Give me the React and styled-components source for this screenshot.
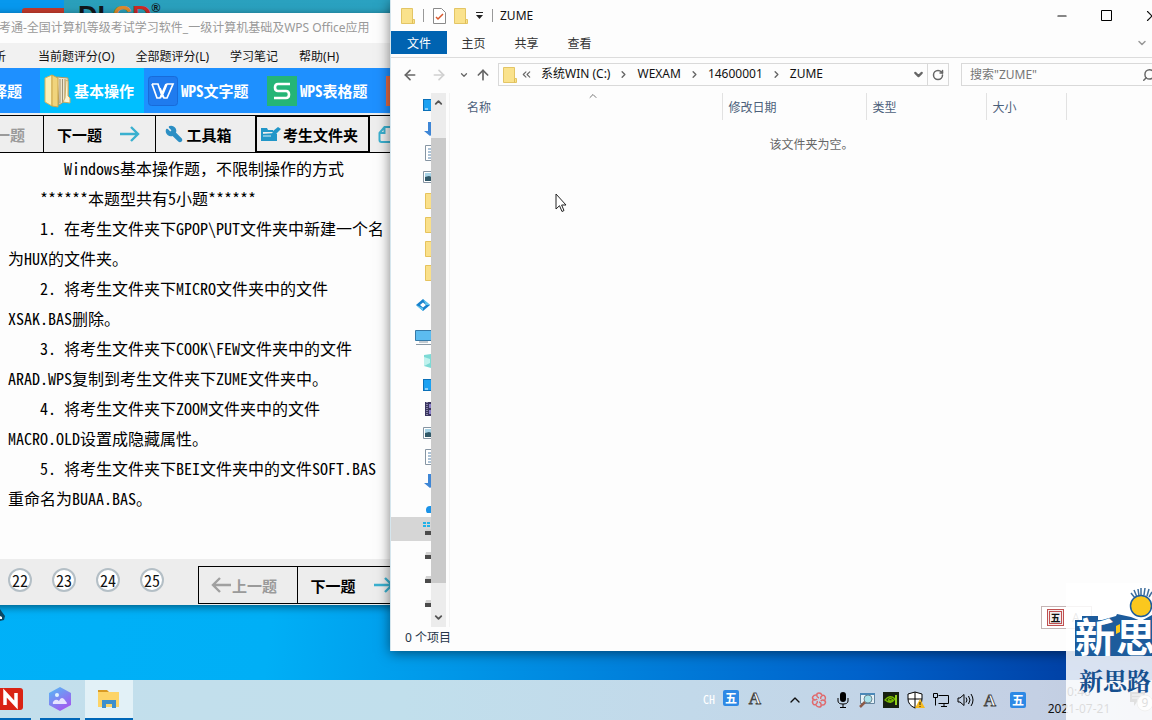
import React from 'react';
import styled, { createGlobalStyle } from 'styled-components';
import {
  ArrowLeft, ArrowRight, ArrowUp, ChevronDown, ChevronUp, ChevronRight,
  ChevronsLeft, RotateCw, Search, Wrench, Minus, X,
} from 'lucide-react';

const uiFont = '"Noto Sans", "Noto Sans CJK SC", sans-serif';
const songFont = '"Noto Sans Mono CJK SC", "Liberation Mono", "Noto Sans CJK SC", monospace';

const GlobalStyle = createGlobalStyle`
  * { box-sizing: border-box; }
  body {
    margin: 0;
    font-family: ${uiFont};
    font-size: 12px;
    color: #111;
  }
  button, input {
    font: inherit;
    color: inherit;
    border: none;
    background: none;
    padding: 0;
    margin: 0;
  }
  svg { display: block; flex: none; }
`;

const Desktop = styled.div`
  position: relative;
  height: 100vh;
  min-height: 480px;
  overflow: hidden;
  display: flex;
  flex-direction: column;
  justify-content: flex-end;
  background: linear-gradient(97deg, #00b1f8 0%, #00aff6 28%, #0089e0 52%, #0062cb 76%, #0043a8 92%, #003c9c 100%);
`;

/* ---------- wallpaper ---------- */

const Wallpaper = styled.div`
  position: absolute;
  top: 0;
  left: 0;
  right: 0;
  height: 60px;
  display: flex;
  background: #0798ee;
`;

const RedTile = styled.div`
  width: 42px;
  height: 24px;
  margin: 8px 0 0 22px;
  border-radius: 3px 0 0 0;
  background: #c43a2c;
`;

const Banner = styled.div`
  flex: 1;
  display: flex;
  padding-left: 14px;
  background: linear-gradient(90deg, #2a9fba, #2aa3c4 40%, #1784aa 70%, #167a9e);
  font: bold 27px/32px "Liberation Sans", sans-serif;
  color: #10161b;
  sup { font-size: 12px; line-height: 17px; }
`;

const BannerLetter = styled.span`
  color: ${(p) => p.$color};
`;

/* ---------- exam window ---------- */

const ExamWindow = styled.section`
  position: absolute;
  top: 13px;
  left: -12px;
  width: 420px;
  bottom: 115px;
  display: flex;
  flex-direction: column;
  background: #fdfdfd;
  box-shadow: 0 2px 8px rgba(0, 0, 0, 0.5);
`;

const ExamTitle = styled.header`
  height: 30px;
  line-height: 30px;
  padding-left: 11px;
  white-space: nowrap;
  color: #999;
`;

const ExamMenu = styled.nav`
  display: flex;
  gap: 21px;
  height: 25px;
  padding-left: 6px;
  background: #f1f1f1;
  button { white-space: nowrap; }
  button:first-child { margin-right: 11px; }
`;

const ExamTabs = styled.nav`
  display: flex;
  height: 45px;
  background: #1e90ff;
`;

const ExamTab = styled.button`
  display: flex;
  align-items: center;
  gap: ${(p) => p.$gap || 0}px;
  width: ${(p) => p.$width}px;
  padding-left: 4px;
  flex: none;
  white-space: nowrap;
  font: bold 15px ${songFont};
  color: #fff;
  background: ${(p) => (p.$active ? '#00bfff' : 'transparent')};
`;

const ToolRow = styled.div`
  display: flex;
  flex: none;
  padding-top: 2px;
  background: #eee;
`;

const ToolButton = styled.button`
  display: flex;
  align-items: center;
  justify-content: center;
  flex: none;
  gap: ${(p) => p.$gap || 0}px;
  width: ${(p) => p.$width}px;
  height: 38px;
  margin-right: -1px;
  padding-right: ${(p) => p.$slack || 0}px;
  white-space: nowrap;
  font: bold 15px ${songFont};
  color: ${(p) => (p.$muted ? '#9a9a9a' : '#000')};
  border: ${(p) => (p.$current ? 2 : 1)}px solid #000;
`;

const Question = styled.article`
  flex: 1;
  overflow: hidden;
  width: 400px;
  padding-left: 20px;
  font: 16px/30px ${songFont};
  color: #000;
  p { margin: 0; text-indent: 32px; }
  p:first-child { text-indent: 56px; }
`;

const ExamFooter = styled.footer`
  display: flex;
  flex: none;
  height: 46px;
  padding: 7px 0 0 20px;
  background: #ededed;
`;

const NumberList = styled.div`
  display: flex;
  gap: 20px;
  padding-top: 2px;
  margin-right: 34px;
`;

const NumberButton = styled.button`
  width: 24px;
  height: 24px;
  border: 2px solid #b4bfc6;
  border-radius: 50%;
  background: #fff;
  font: 16px/20px ${songFont};
  display: flex;
  justify-content: center;
`;

/* ---------- explorer window ---------- */

const ExplorerWindow = styled.section`
  position: absolute;
  top: 0;
  left: 390px;
  right: -22px;
  bottom: 69px;
  display: flex;
  flex-direction: column;
  background: #fdfdfd;
  border-left: 1px solid #d5e6ee;
  box-shadow: 0 2px 12px rgba(0, 0, 0, 0.5);
`;

const TitleBar = styled.header`
  display: flex;
  align-items: center;
  height: 31px;
  padding-left: 10px;
  gap: 7px;
`;

const QuickTools = styled.div`
  display: flex;
  align-items: center;
  gap: 8px;
`;

const Divider = styled.span`
  width: 1px;
  height: 13px;
  background: #999;
`;

const WindowButtons = styled.div`
  display: flex;
  margin-left: auto;
`;

const WindowButton = styled.button`
  display: flex;
  align-items: center;
  justify-content: center;
  width: 45px;
  height: 30px;
`;

const Ribbon = styled.nav`
  display: flex;
  align-items: center;
  height: 27px;
  padding: 0 26px 3px 0;
  border-bottom: 1px solid #dcdcdc;
  svg { margin-left: auto; }
`;

const RibbonTab = styled.button`
  width: ${(p) => (p.$file ? 56 : 53)}px;
  height: 23px;
  color: ${(p) => (p.$file ? '#fff' : '#333')};
  background: ${(p) => (p.$file ? '#0063b1' : 'transparent')};
`;

const AddressRow = styled.div`
  display: flex;
  align-items: center;
  height: 35px;
  padding: 0 9px 2px 11px;
  color: #666;
`;

const NavButton = styled.button`
  display: flex;
  align-items: center;
  justify-content: center;
  width: ${(p) => p.$width}px;
  color: ${(p) => (p.$faded ? '#d0d0d0' : '#666')};
`;

const AddressBox = styled.div`
  display: flex;
  align-items: center;
  flex: 1;
  height: 23px;
  margin-right: 12px;
  padding-left: 4px;
  border: 1px solid #d9d9d9;
`;

const Crumbs = styled.div`
  display: flex;
  align-items: center;
  flex: 1;
  gap: 8px;
  padding-left: 3px;
  a { color: #111; text-decoration: none; white-space: nowrap; line-height: 17px; padding-bottom: 2px; }
`;

const Refresh = styled.button`
  display: flex;
  align-items: center;
  justify-content: center;
  width: 21px;
  height: 21px;
  margin-left: 2px;
  border-left: 1px solid #d9d9d9;
`;

const SearchBox = styled.label`
  display: flex;
  align-items: center;
  width: 204px;
  height: 23px;
  padding: 0 8px;
  border: 1px solid #d9d9d9;
  input { flex: 1; min-width: 0; outline: none; }
  input::placeholder { color: #767676; opacity: 1; }
`;

const SearchIcon = styled(Search)`
  transform: scaleX(-1);
`;

const ExplorerBody = styled.div`
  display: flex;
  flex: 1;
  min-height: 0;
`;

const NavPane = styled.ul`
  width: 40px;
  margin: 0;
  padding: 0;
  list-style: none;
  overflow: hidden;
`;

const NavItem = styled.li`
  display: flex;
  align-items: center;
  height: 24px;
  margin-top: ${(p) => (p.$root ? 8 : 0)}px;
  padding-left: ${(p) => (p.$root ? 24 : 32)}px;
  background: ${(p) => (p.$selected ? '#d6d6d6' : 'transparent')};
`;

const ScrollBar = styled.div`
  display: flex;
  flex-direction: column;
  width: 15px;
  background: #ececec;
`;

const ScrollButton = styled.button`
  display: flex;
  justify-content: center;
  align-items: ${(p) => (p.$end ? 'flex-end' : 'flex-start')};
  padding: 4px 0;
  height: ${(p) => p.$height}px;
`;

const ScrollThumb = styled.div`
  flex: 1;
  background: #cacaca;
`;

const FilePane = styled.div`
  flex: 1;
  margin-left: 3px;
  border-left: 1px solid #f3f3f3;
  padding-left: 11px;
`;

const FileTable = styled.table`
  width: 100%;
  table-layout: fixed;
  border-collapse: collapse;
  color: #666;
  th {
    height: 27px;
    padding: 0 0 0 6px;
    text-align: left;
    font-weight: normal;
    color: #4c607a;
    border-right: 1px solid #e2e2e2;
  }
  th:last-child { border-right: none; }
  td {
    padding: 15px 12px 0 0;
    text-align: center;
  }
`;

const SortMark = styled(ChevronUp)`
  position: absolute;
  top: 90px;
  left: 196px;
  color: #777;
`;

const StatusBar = styled.footer`
  height: 24px;
  padding-left: 14px;
  line-height: 22px;
  color: #26364a;
`;

/* ---------- ime box, stamp ---------- */

const ImeBox = styled.div`
  position: absolute;
  right: 60px;
  bottom: 91px;
  display: flex;
  align-items: center;
  gap: 8px;
  width: 51px;
  height: 23px;
  padding-left: 5px;
  border: 1px solid #c4b4b4;
  background: #fff;
  color: #777;
`;

const Seal = styled.span`
  width: 17px;
  height: 17px;
  border: 3px double #c05050;
  background: #f4eded;
  font: bold 10px/11px "Noto Sans CJK SC", sans-serif;
  text-align: center;
  color: #111;
`;

const Stamp = styled.aside`
  position: absolute;
  right: 0;
  bottom: 0;
  width: 86px;
  height: 137px;
  padding: 3px 0 0 8px;
  overflow: hidden;
  background: rgba(255, 255, 255, 0.85);
`;

const StampName = styled.div`
  margin-left: 5px;
  font: bold 24px/36px "Noto Serif CJK SC", "Noto Sans CJK SC", sans-serif;
  color: #16508e;
  white-space: nowrap;
`;

/* ---------- taskbar ---------- */

const Taskbar = styled.footer`
  position: relative;
  display: flex;
  height: 40px;
  background: linear-gradient(90deg, #c3dfec, #c1dfec 35%, #c2d9ea 60%, #c4d0e4 90%, #c0cadd);
`;

const TaskButton = styled.button`
  display: flex;
  justify-content: ${(p) => (p.$first ? 'flex-start' : 'center')};
  align-items: center;
  width: ${(p) => p.$width}px;
  margin-right: ${(p) => p.$after || 0}px;
  border-bottom: 2px solid #0067b8;
  background: ${(p) => (p.$active ? '#e2f1f7' : 'transparent')};
`;

const Tray = styled.div`
  display: flex;
  align-items: center;
  margin-left: auto;
  gap: 8px;
`;

const InputLang = styled.div`
  display: flex;
  align-items: center;
  gap: 8px;
  margin-right: 16px;
  padding-bottom: 4px;
`;

const Lang = styled.span`
  font: 12px ${songFont};
  color: #fff;
`;

const Wubi = styled.span`
  width: 16px;
  height: 16px;
  margin-left: ${(p) => (p.$spaced ? 4 : 0)}px;
  border-radius: 2px;
  background: #2d89e5;
  font: bold 12px/15px "Noto Sans CJK SC", sans-serif;
  text-align: center;
  color: #fff;
`;

const Clock = styled.div`
  width: 68px;
  margin: 0 8px 0 11px;
  text-align: center;
  line-height: 17px;
`;

const ArrowIcon = ({ flip, color = '#3ab0cf' }) => (
  <svg width="20" height="16" viewBox="0 0 20 16" fill="none" stroke={color} strokeWidth="2.4">
    <path d={flip ? 'M20 8H2M9 1L2 8l7 7' : 'M0 8h18M11 1l7 7-7 7'} />
  </svg>
);

const FolderIcon = ({ width = 14, height = 16 }) => (
  <svg width={width} height={height} viewBox="0 0 14 16">
    <path d="M.5.5h11v11h2v4H.5z" fill="#fae28c" stroke="#e3c565" />
    <path d="M11.5 11.5v4" stroke="#dfbe57" />
  </svg>
);

const BinderIcon = () => (
  <svg width="27" height="34" viewBox="0 0 27 34">
    <path d="M13 3l11 1v21l-9 6z" fill="#efe6cc" stroke="#b39a63" />
    <path d="M16 5v24M18.500 5v23M21 5v20" stroke="#8a7b5e" strokeWidth=".8" />
    <path d="M1 4l7-3v31l-7-4z" fill="#fbf0b8" stroke="#d5b458" />
    <path d="M8 1l6 3v29l-6-1z" fill="#f0d47c" stroke="#cda64a" />
    <path d="M22 6l2 1v15l2 2v5l-7-1 2-4z" fill="#fbf3d6" stroke="#cfae60" />
  </svg>
);

const WpsWriter = () => (
  <svg width="30" height="30" viewBox="0 0 30 30">
    <rect x=".5" y=".5" width="29" height="29" rx="3" fill="#1f7bee" stroke="#186bd9" />
    <path d="M4 8h6l4 12 5-12h6l-6 14h-3L12 12M4 8l5 14h3l6-14" fill="none" stroke="#fff" strokeWidth="1.700" />
  </svg>
);

const WpsSheet = () => (
  <svg width="30" height="30" viewBox="0 0 30 30">
    <rect width="30" height="30" fill="#25b577" />
    <path d="M23 8H11q-3 0-3 3.500t3 3.500h8q3 0 3 3.500t-3 3.500H7" fill="none" stroke="#fff" strokeWidth="2.600" />
  </svg>
);

const FolderEdit = () => (
  <svg width="20" height="15" viewBox="0 0 20 15" fill="#2196c8">
    <path d="M0 1h6l1 2h5v2H2v2H0z" />
    <path d="M0 7l14-1 2 1v7H0z" />
    <path d="M11 7l1-3 5-4 3 2-5 5z" />
    <path d="M2 9h8" stroke="#d8eef6" />
  </svg>
);

const SheetIcon = () => (
  <svg width="20" height="20" viewBox="0 0 20 20" fill="none" stroke="#3ab0cf" strokeWidth="2">
    <path d="M1.500 9l5-6h12v15h-15q-2 0-2-2zM1.500 9h5V3" />
  </svg>
);

// drawings of the navigation pane, keyed by item kind
const navShapes = {
  desktop: <><rect x=".5" y="2.5" width="15" height="11" fill="#1ba1f2" stroke="#0a70b8" /><path d="M2 12h3" stroke="#fff" /></>,
  download: <path d="M5 1h5v8h4L7 15 1 10h4z" fill="#3e86d6" />,
  document: <><path d="M2.500.5h11v15h-11z" fill="#fff" stroke="#8695a3" /><path d="M5 4h6M5 7h6M5 10h6M5 13h6" stroke="#5a86ad" /></>,
  picture: <><path d="M.5 2.500h15v11H.5z" fill="#fff" stroke="#8695a3" /><path d="M2 4h12v8H2z" fill="#a8d3e6" /><path d="M2 12V8l4-1 8 3v2z" fill="#305868" /></>,
  folder: <path d="M2.500.5h12v15h-12z" fill="#fae08a" stroke="#e6c35c" />,
  cloud: <><path d="M8 2l7 6-7 6-7-6z" fill="#1781cc" /><path d="M8 5.500l3 2.500-3 2.500L5 8z" fill="#fff" /><path d="M8 2l7 6h-4zM1 8l7 6v-3z" fill="#5fc5ee" /></>,
  computer: <><path d="M.5 1.500h16v10H.5z" fill="#5cbcf0" stroke="#3679a7" /><path d="M4 13h9M1 15.500h16" stroke="#8a99a6" /></>,
  cube: <><path d="M1 2l7-1v14l-7-2z" fill="#7ddad5" /><path d="M1 4l6 2v4l-6 3z" fill="#bff2ee" /></>,
  video: <><path d="M2 1h13v14H2z" fill="#3a3560" /><path d="M4 1v14" stroke="#d8d8ea" strokeDasharray="1 1" /><path d="M6 3h6v4H6zM6 9h6v4H6z" fill="#8a7fc8" /></>,
  music: <circle cx="7" cy="13" r="4" fill="#1b93e8" />,
  system: <><path d="M0 1h3v2H0zM4 1h3v2H4zM0 4h3v2H0zM4 4h3v2H4z" fill="#22b2e8" /><path d="M2 10h14v4H2z" fill="#4b4b4b" /><path d="M3 8h12v2H2z" fill="#cfcfcf" /></>,
  drive: <><path d="M3 7h12l1 4H2z" fill="#d3d3d3" /><path d="M2 10h14v4H2z" fill="#4b4b4b" /></>,
  disc: <circle cx="5" cy="19" r="8" fill="#5a93a8" />,
};

const NavIcon = ({ kind }) => (
  <svg width="17" height="16" viewBox="0 0 17 16">{navShapes[kind]}</svg>
);

const navItems = [
  'desktop', 'download', 'document', 'picture', 'folder', 'folder', 'folder', 'folder',
  'cloud', 'computer', 'cube', 'desktop', 'video', 'picture', 'document', 'download',
  'music', 'system', 'drive', 'drive', 'drive', 'disc',
];

const questions = [
  'Windows基本操作题，不限制操作的方式',
  '******本题型共有5小题******',
  '1. 在考生文件夹下GPOP\\PUT文件夹中新建一个名为HUX的文件夹。',
  '2. 将考生文件夹下MICRO文件夹中的文件XSAK.BAS删除。',
  '3. 将考生文件夹下COOK\\FEW文件夹中的文件ARAD.WPS复制到考生文件夹下ZUME文件夹中。',
  '4. 将考生文件夹下ZOOM文件夹中的文件MACRO.OLD设置成隐藏属性。',
  '5. 将考生文件夹下BEI文件夹中的文件SOFT.BAS重命名为BUAA.BAS。',
];

const crumbs = ['系统WIN (C:)', 'WEXAM', '14600001', 'ZUME'];

const LetterA = () => (
  <svg width="16" height="16" viewBox="0 0 16 16">
    <text x="8" y="14" textAnchor="middle" fontFamily="Liberation Serif, serif" fontSize="17" fontWeight="bold" fill="#fff" stroke="#444" strokeWidth="0.800">A</text>
  </svg>
);

function Exam() {
  return (
    <ExamWindow>
      <ExamTitle>考通-全国计算机等级考试学习软件_一级计算机基础及WPS Office应用</ExamTitle>
      <ExamMenu>
        {['析', '当前题评分(O)', '全部题评分(L)', '学习笔记', '帮助(H)'].map((m) => (
          <button key={m}>{m}</button>
        ))}
      </ExamMenu>
      <ExamTabs>
        <ExamTab $width={52}>择题</ExamTab>
        <ExamTab $width={104} $gap={3} $active><BinderIcon />基本操作</ExamTab>
        <ExamTab $width={119} $gap={3}><WpsWriter />WPS文字题</ExamTab>
        <ExamTab $width={119} $gap={3}><WpsSheet />WPS表格题</ExamTab>
        <ExamTab $width={26} aria-label="WPS演示">
          <svg width="22" height="30"><rect width="22" height="30" fill="#e46a45" /></svg>
        </ExamTab>
      </ExamTabs>
      <ToolRow>
        <ToolButton $width={56} $slack={12} $muted>一题</ToolButton>
        <ToolButton $width={113} $gap={18} $slack={2}>下一题<ArrowIcon /></ToolButton>
        <ToolButton $width={101} $gap={3} $slack={14}>
          <Wrench size={18} color="#2c8fc4" fill="#2c8fc4" transform="scale(-1 1)" />工具箱
        </ToolButton>
        <ToolButton $width={115} $gap={2} $slack={6} $current><FolderEdit />考生文件夹</ToolButton>
        <ToolButton $width={38} aria-label="答题"><SheetIcon /></ToolButton>
      </ToolRow>
      <Question>
        {questions.map((q) => <p key={q}>{q}</p>)}
      </Question>
      <ExamFooter>
        <NumberList>
          {[22, 23, 24, 25].map((n) => <NumberButton key={n}>{n}</NumberButton>)}
        </NumberList>
        <ToolButton $width={100} $gap={1} $slack={8} $muted><ArrowIcon flip color="#a0a0a0" />上一题</ToolButton>
        <ToolButton $width={112} $gap={18} $slack={2}>下一题<ArrowIcon /></ToolButton>
      </ExamFooter>
    </ExamWindow>
  );
}

function Explorer() {
  return (
    <ExplorerWindow>
      <TitleBar>
        <QuickTools>
          <FolderIcon />
          <Divider />
          <svg width="14" height="16" viewBox="0 0 14 16">
            <path d="M1.500.5h8l4 4v11h-12z" fill="#fff" stroke="#8a8a8a" />
            <path d="M4 9l2 2 5-5" fill="none" stroke="#d9572b" strokeWidth="1.500" />
          </svg>
          <FolderIcon />
          <svg width="8" height="8" viewBox="0 0 8 8"><path d="M0 0h7v1H0zM0 3h7L3.500 7z" fill="#222" /></svg>
          <Divider />
        </QuickTools>
        <span>ZUME</span>
        <WindowButtons>
          <WindowButton aria-label="最小化"><Minus size={14} strokeWidth={2} /></WindowButton>
          <WindowButton aria-label="最大化">
            <svg width="11" height="11"><path d="M.5.5h10v10H.5z" fill="none" stroke="#000" /></svg>
          </WindowButton>
          <WindowButton aria-label="关闭"><X size={18} strokeWidth={1.500} /></WindowButton>
        </WindowButtons>
      </TitleBar>
      <Ribbon>
        <RibbonTab $file>文件</RibbonTab>
        <RibbonTab>主页</RibbonTab>
        <RibbonTab>共享</RibbonTab>
        <RibbonTab>查看</RibbonTab>
        <ChevronDown size={12} color="#999" strokeWidth={3} />
      </Ribbon>
      <AddressRow>
        <NavButton $width={16} aria-label="后退"><ArrowLeft size={16} strokeWidth={2.500} /></NavButton>
        <NavButton $width={42} $faded aria-label="前进"><ArrowRight size={16} strokeWidth={2.500} /></NavButton>
        <NavButton $width={8} aria-label="历史"><ChevronDown size={10} strokeWidth={3} /></NavButton>
        <NavButton $width={30} aria-label="向上"><ArrowUp size={16} strokeWidth={2.500} /></NavButton>
        <AddressBox>
          <FolderIcon />
          <Crumbs>
            <ChevronsLeft size={13} />
            {crumbs.map((c, i) => (
              <React.Fragment key={c}>
                {i > 0 && <ChevronRight size={11} strokeWidth={3} />}
                <a href="#dir">{c}</a>
              </React.Fragment>
            ))}
          </Crumbs>
          <ChevronDown size={13} strokeWidth={4} />
          <Refresh aria-label="刷新"><RotateCw size={12} strokeWidth={3} /></Refresh>
        </AddressBox>
        <SearchBox>
          <input type="text" aria-label="搜索" placeholder={'搜索"ZUME"'} />
          <SearchIcon size={14} strokeWidth={2.500} />
        </SearchBox>
      </AddressRow>
      <ExplorerBody>
        <NavPane>
          {navItems.map((kind, i) => (
            <NavItem key={i} $root={kind === 'cloud' || kind === 'computer'} $selected={kind === 'system'}>
              <NavIcon kind={kind} />
            </NavItem>
          ))}
        </NavPane>
        <ScrollBar>
          <ScrollButton $height={45} aria-label="上滚"><ChevronUp size={11} strokeWidth={4} color="#555" /></ScrollButton>
          <ScrollThumb />
          <ScrollButton $height={44} $end aria-label="下滚"><ChevronDown size={11} strokeWidth={4} color="#555" /></ScrollButton>
        </ScrollBar>
        <FilePane>
          <FileTable>
            <colgroup>
              <col width="261" /><col width="144" /><col width="120" /><col width="80" /><col />
            </colgroup>
            <thead>
              <tr><th>名称</th><th>修改日期</th><th>类型</th><th>大小</th><th aria-label="其他" /></tr>
            </thead>
            <tbody>
              <tr><td colSpan={5}>该文件夹为空。</td></tr>
            </tbody>
          </FileTable>
          <SortMark size={12} />
        </FilePane>
      </ExplorerBody>
      <StatusBar>0 个项目</StatusBar>
    </ExplorerWindow>
  );
}

const MouseCursor = styled.svg`
  position: absolute;
  left: 555px;
  top: 193px;
`;

const DesktopHint = styled.svg`
  position: absolute;
  left: 0;
  bottom: 98px;
`;

function App() {
  return (
    <Desktop>
      <GlobalStyle />
      <Wallpaper>
        <RedTile />
        <Banner>
          D<BannerLetter $color="#10161b">I</BannerLetter>
          <BannerLetter $color="#e08a2c">&nbsp;C</BannerLetter>
          <BannerLetter $color="#cc2a26">D</BannerLetter>
          <sup>®</sup>
        </Banner>
      </Wallpaper>
      <DesktopHint width="6" height="14" viewBox="0 0 6 14">
        <path d="M0 1l2 3 3 4-1 4-4 1z" fill="#0d4a66" /><path d="M0 8l2 1v2H0z" fill="#fff" />
      </DesktopHint>
      <Exam />
      <Explorer />
      <MouseCursor width="12" height="20" viewBox="0 0 12 20">
        <path d="M1 1v15l3.500-3.300L7 18.500l2-1-2.400-5.500H11z" fill="#fff" stroke="#222" />
      </MouseCursor>
      <ImeBox><Seal>五</Seal><span>A</span></ImeBox>
      <Taskbar>
        <TaskButton $width={31} $after={9} $first aria-label="N">
          <svg width="23" height="24" viewBox="0 0 23 24">
            <path d="M0 1h20q3 0 3 3v16q0 3-3 3H0z" fill="#d92314" />
            <path d="M5 18V6l11 12V6" fill="none" stroke="#fff" strokeWidth="3.500" />
          </svg>
        </TaskButton>
        <TaskButton $width={40} $after={5} aria-label="图片">
          <svg width="22" height="24" viewBox="0 0 22 24">
            <defs>
              <linearGradient id="hex" x1="0" y1="0" x2="0.600" y2="1">
                <stop offset="0" stopColor="#52bdf5" /><stop offset="1" stopColor="#a15cf0" />
              </linearGradient>
            </defs>
            <path d="M11 0l11 6v12l-11 6-11-6V6z" fill="url(#hex)" />
            <path d="M4 17q-1-2 2-4 2-1 4 1 2-5 5-2l3 4q0 1-1 1z" fill="#e6e4ff" />
            <circle cx="8" cy="8" r="2" fill="#dff4ff" />
          </svg>
        </TaskButton>
        <TaskButton $width={48} $active aria-label="文件资源管理器">
          <svg width="22" height="19" viewBox="0 0 22 19">
            <path d="M0 0h9l2 2h-11z" fill="#d99a22" />
            <path d="M0 2h21v15H0z" fill="#fdd467" />
            <path d="M4 18v-8h14v8h-4v-4H8v4z" fill="#3d8fcc" />
          </svg>
        </TaskButton>
        <Tray>
          <InputLang>
            <Lang>CH</Lang>
            <Wubi>五</Wubi>
            <LetterA />
          </InputLang>
          <ChevronUp size={16} strokeWidth={2} />
          <svg width="16" height="16" viewBox="0 0 16 16" fill="none" stroke="#e0696c" strokeWidth="1.500">
            {[0, 60, 120, 180, 240, 300].map((a) => (
              <path key={a} transform={`rotate(${a} 8 8)`} d="M8 6C5 5 5 1 8 1q2 0 3 2" />
            ))}
          </svg>
          <svg width="16" height="16" viewBox="0 0 16 16">
            <rect x="5" y="0" width="6" height="10" rx="3" />
            <path d="M3 6v3q0 3 5 3t5-3V6M8 12v3M5 15.500h6" fill="none" stroke="#000" />
          </svg>
          <svg width="16" height="16" viewBox="0 0 16 16">
            <path d="M1.500 1.500h14v10h-14z" fill="#e6f2f8" stroke="#6585a0" />
            <path d="M1 1h15v2H1z" fill="#4b88b8" />
            <circle cx="9" cy="7" r="4" fill="#a8e2ea" stroke="#6d8591" />
            <path d="M6 10l-5 5" stroke="#8c5a48" strokeWidth="2.500" />
          </svg>
          <svg width="16" height="16" viewBox="0 0 16 16">
            <rect width="16" height="16" fill="#17200f" />
            <path d="M2 8q5-6 10-1-4 6-10 1zM5 8q2-3 5 0-3 2-5 0" fill="none" stroke="#76b900" strokeWidth="1.300" />
            <path d="M12 3h2v10h-2z" fill="#8fd01a" />
          </svg>
          <svg width="18" height="18" viewBox="0 0 18 18">
            <path d="M8 1l7 2v5q0 6-7 9-7-3-7-9V3z" fill="#fff" stroke="#000" />
            <path d="M8 1v16M1 8h14" stroke="#000" />
            <path d="M13 8l5 9H8z" fill="#f6b91e" /><path d="M13 11v3M13 15v1" stroke="#222" />
          </svg>
          <svg width="16" height="16" viewBox="0 0 16 16" fill="none" stroke="#000">
            <path d="M5.500 3.500h10v8h-10M.5 1.500h4v4h-4zM2.500 5.500v8M8 14.500h6M11 11.500v3" />
          </svg>
          <svg width="17" height="16" viewBox="0 0 17 16" fill="none" stroke="#000">
            <path d="M1 6h2l4-3.500v11L3 10H1zM9 5.500q2 2.500 0 5M11.500 4q3 4 0 8M14 2q4 6 0 12" />
          </svg>
          <LetterA />
          <Wubi $spaced>五</Wubi>
          <Clock>0:40<br />2021-07-21</Clock>
          <svg width="23" height="24" viewBox="0 0 23 24">
            <path d="M1 4h15v10H8l-3 4v-4H1z" fill="#333" />
            <path d="M3 7h11M3 10h11" stroke="#ccd" />
            <circle cx="16" cy="15" r="8" fill="#eee" stroke="#999" />
            <text x="16" y="19" textAnchor="middle" fontFamily="Noto Sans" fontSize="12" fill="#222">9</text>
          </svg>
        </Tray>
      </Taskbar>
      <Stamp>
        <svg width="78" height="76" viewBox="0 0 78 76">
          <g stroke="#3d6d9c" strokeWidth="1.500">
            <path d="M57 7l4 5M60 4l3 7M64 3l1 7M67 2v7M71 2l-1 7M75 3l-2 7M78 6l-3 5" />
          </g>
          <circle cx="67" cy="20" r="10.500" fill="#fbc81e" stroke="#1d5c9c" strokeWidth="1.500" />
          <path d="M1 34h7v-4h16v4h4l14-4 1-2 14 3 10 4 11-6v41H1z" fill="#1d5c9c" />
          <g fontFamily="Noto Sans CJK SC" fontWeight="700" fontSize="40" fill="#fff">
            <text x="1" y="66">新</text>
            <text x="42" y="66">思</text>
          </g>
          <path d="M42 40l4-2v8l-4 2z" fill="#fbc81e" />
        </svg>
        <StampName>新思路</StampName>
      </Stamp>
    </Desktop>
  );
}

export default App;
